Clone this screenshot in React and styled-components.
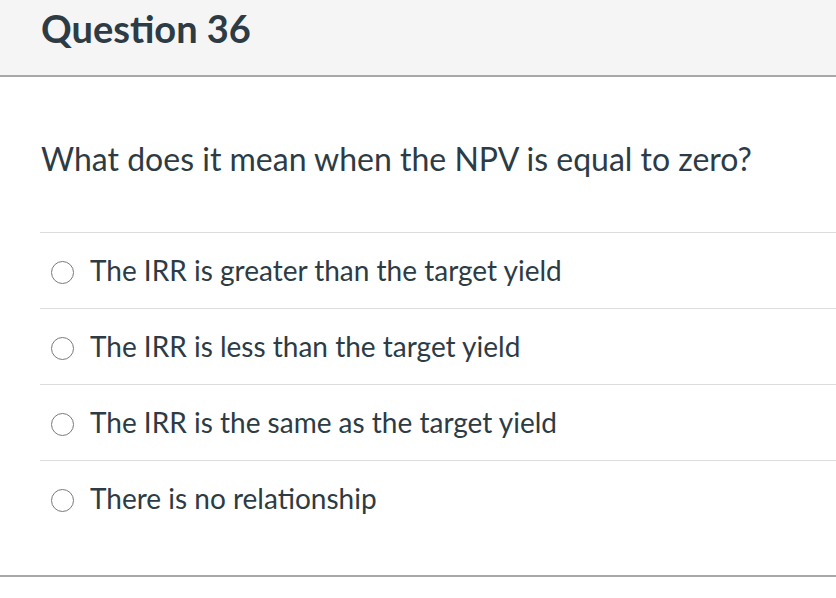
import React from "react";
import styled, { createGlobalStyle } from "styled-components";

const Global = createGlobalStyle`
  html, body { margin: 0; padding: 0; background: #fff; }
  body { font-family: Lato, "Noto Sans", sans-serif; color: #2d3b45; }
`;

const Page = styled.div`
  width: 836px;
  height: 598px;
  display: flex;
  flex-direction: column;
  overflow: hidden;
`;

const Header = styled.div`
  background: #f5f5f5;
  border-bottom: 2px solid #a8a8a8;
  padding: 10px 0 0 41px;
  box-sizing: border-box;
  height: 77px;
`;

const Title = styled.h2`
  margin: 0;
  font-size: 38px;
  font-weight: 700;
  line-height: 37px;
`;

const Body = styled.div`
  padding-top: 66px;
  height: 500px;
  box-sizing: border-box;
  border-bottom: 2px solid #a8a8a8;
`;

const QuestionText = styled.p`
  margin: 0 0 0 41px;
  font-size: 32px;
  line-height: 32px;
`;

const Answers = styled.div`
  margin-top: 57px;
  margin-left: 40px;
  border-top: 1px solid #dcdcdc;
`;

const Row = styled.label`
  height: 75px;
  display: flex;
  align-items: center;
  gap: 16px;
  padding-left: 11px;
  border-bottom: ${(p) => (p.$last ? "none" : "1px solid #dcdcdc")};
  font-size: 28px;
`;

const Radio = styled.span`
  width: 21px;
  height: 21px;
  border: 1.5px solid #7a7a7a;
  border-radius: 50%;
  flex: none;
  margin-top: 4px;
`;

const AnswerText = styled.span`
  margin-top: -2px;
`;

const answers = [
  "The IRR is greater than the target yield",
  "The IRR is less than the target yield",
  "The IRR is the same as the target yield",
  "There is no relationship",
];

export default function App() {
  return (
    <Page>
      <Global />
      <Header>
        <Title>Question 36</Title>
      </Header>
      <Body>
        <QuestionText>What does it mean when the NPV is equal to zero?</QuestionText>
        <Answers>
          {answers.map((a, i) => (
            <Row key={i} $last={i === answers.length - 1}>
              <Radio />
              <AnswerText>{a}</AnswerText>
            </Row>
          ))}
        </Answers>
      </Body>
    </Page>
  );
}
